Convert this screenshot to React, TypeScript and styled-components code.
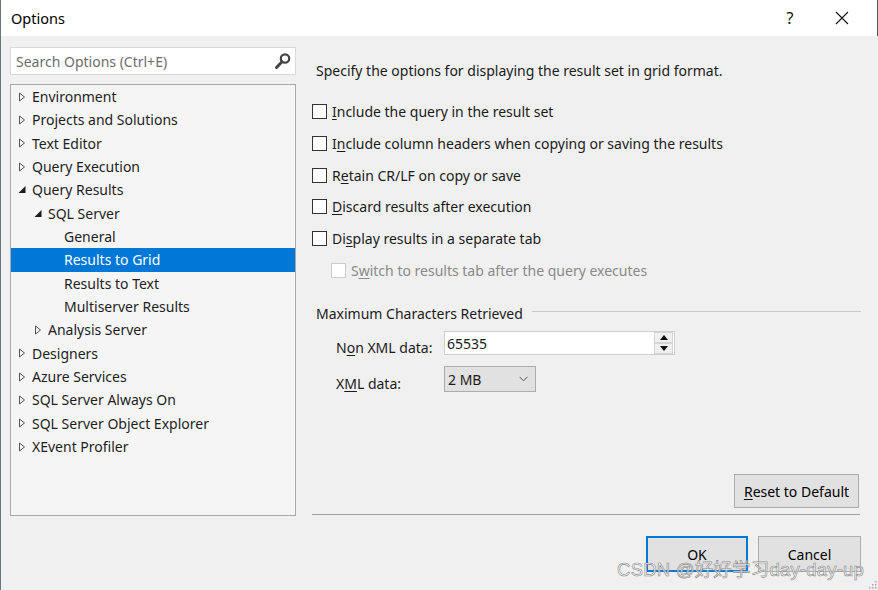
import React from "react";
import styled, { createGlobalStyle } from "styled-components";

const Global = createGlobalStyle`
  html, body { margin: 0; padding: 0; background: #f0f0f0; }
  body { font-family: "Noto Sans", "Open Sans", sans-serif; }
`;

const FONT = `"Noto Sans", "Open Sans", "Noto Sans CJK SC", sans-serif`;

const Window = styled.div`
  position: relative;
  width: 878px;
  height: 590px;
  display: flex;
  flex-direction: column;
  background: #f0f0f0;
  font-family: ${FONT};
  font-size: 14px;
  color: #1b1b1b;
  overflow: hidden;
  box-sizing: border-box;
  border-left: 1px solid #6f7380;
`;

const TitleBar = styled.div`
  height: 36px;
  flex: none;
  display: flex;
  align-items: center;
  background: #ffffff;
  padding-left: 10px;
  box-sizing: border-box;
  border-right: 1px solid #555;
`;

const Title = styled.div`
  flex: 1;
  font-size: 14.5px;
  color: #000;
`;

const TitleButton = styled.div<{ $w: number }>`
  width: ${(p) => p.$w}px;
  height: 36px;
  display: flex;
  align-items: center;
  justify-content: center;
  font-size: 16px;
  color: #111;
`;

const TitleEnd = styled.div`
  width: 6px;
`;

const Main = styled.div`
  flex: 1;
  display: flex;
  min-height: 0;
`;

const LeftPane = styled.div`
  width: 286px;
  flex: none;
  margin: 11px 0 0 9px;
  display: flex;
  flex-direction: column;
  gap: 9px;
`;

const SearchBox = styled.div`
  height: 28px;
  box-sizing: border-box;
  border: 1px solid #d9d9d9;
  background: #fff;
  display: flex;
  align-items: center;
  padding: 0 3px 0 5px;
`;

const SearchText = styled.div`
  flex: 1;
  color: #6d6d6d;
  font-size: 14px;
`;

const Tree = styled.div`
  height: 432px;
  box-sizing: border-box;
  border: 1px solid #a9a9a9;
  background: #f5f5f5;
  display: flex;
  flex-direction: column;
`;

const TreeRow = styled.div<{ $level: number; $selected?: boolean }>`
  height: 23.33px;
  flex: none;
  display: flex;
  align-items: center;
  padding-left: ${(p) => 7 + p.$level * 16}px;
  background: ${(p) => (p.$selected ? "#0078d7" : "transparent")};
  color: ${(p) => (p.$selected ? "#ffffff" : "#1e1e1e")};
  font-size: 14px;
  white-space: nowrap;
`;

const Arrow = styled.span`
  width: 14px;
  flex: none;
  display: flex;
  align-items: center;
`;

const RightPane = styled.div`
  flex: 1;
  margin-left: 16px;
  margin-right: 17px;
  display: flex;
  flex-direction: column;
`;

const Description = styled.div`
  margin-top: 25px;
  line-height: 20px;
  padding-left: 4px;
  font-size: 14px;
`;

const CheckList = styled.div`
  margin-top: 15px;
  display: flex;
  flex-direction: column;
`;

const CheckRow = styled.div<{ $indent?: boolean; $disabled?: boolean }>`
  height: 31.7px;
  display: flex;
  align-items: center;
  padding-left: ${(p) => (p.$indent ? 19 : 0)}px;
  color: ${(p) => (p.$disabled ? "#8a8a8a" : "#1b1b1b")};
  gap: 5px;
`;

const Box = styled.span<{ $disabled?: boolean }>`
  width: 15px;
  height: 15px;
  box-sizing: border-box;
  border: 1px solid ${(p) => (p.$disabled ? "#cccccc" : "#333333")};
  background: #ffffff;
  flex: none;
`;

const U = styled.span`
  text-decoration: underline;
  text-underline-offset: 2px;
`;

const GroupHeader = styled.div`
  margin-top: 17px;
  height: 20px;
  display: flex;
  align-items: center;
  gap: 9px;
  padding-left: 4px;
`;

const GroupLine = styled.div`
  flex: 1;
  height: 1px;
  background: #c8c8c8;
  margin-top: -3px;
`;

const FieldRow = styled.div<{ $mt: number; $h: number }>`
  margin-top: ${(p) => p.$mt}px;
  height: ${(p) => p.$h}px;
  display: flex;
  align-items: center;
`;

const FieldLabel = styled.div`
  width: 132px;
  padding-left: 24px;
  flex: none;
  box-sizing: border-box;
  margin-top: 9px;
  white-space: nowrap;
`;

const NumberInput = styled.div`
  width: 231px;
  height: 24px;
  box-sizing: border-box;
  border: 1px solid #cfcfcf;
  background: #fff;
  display: flex;
  align-items: center;
  padding-left: 2px;
`;

const NumberValue = styled.div`
  flex: 1;
  font-size: 14px;
`;

const Spin = styled.div`
  width: 19px;
  height: 22px;
  display: flex;
  flex-direction: column;
  margin-right: 1px;
`;

const SpinButton = styled.div`
  flex: 1;
  box-sizing: border-box;
  border: 1px solid #d4d4d4;
  background: #f0f0f0;
  display: flex;
  align-items: center;
  justify-content: center;
`;

const Combo = styled.div`
  width: 92px;
  height: 26px;
  box-sizing: border-box;
  border: 1px solid #adadad;
  background: #e1e1e1;
  display: flex;
  align-items: center;
  padding: 0 7px 0 3px;
  justify-content: space-between;
`;

const Spacer = styled.div`
  flex: 1;
`;

const ResetRow = styled.div`
  display: flex;
  justify-content: flex-end;
  padding-right: 2px;
`;

const Button = styled.div<{ $w: number; $h: number; $default?: boolean }>`
  width: ${(p) => p.$w}px;
  height: ${(p) => p.$h}px;
  box-sizing: border-box;
  border: ${(p) => (p.$default ? "2px solid #0078d7" : "1px solid #adadad")};
  background: #e1e1e1;
  display: flex;
  align-items: center;
  justify-content: center;
  font-size: 14px;
  color: #000;
`;

const Separator = styled.div`
  height: 1px;
  background: #a0a0a0;
  margin: 6px 1px 0 0;
`;

const ButtonRow = styled.div`
  margin-top: 21px;
  margin-bottom: 18px;
  display: flex;
  justify-content: flex-end;
  gap: 10px;
`;

const Watermark = styled.div`
  position: absolute;
  right: 14px;
  bottom: 9px;
  font-family: "Liberation Sans", "Noto Sans CJK SC", sans-serif;
  font-size: 18.5px;
  color: rgba(250, 250, 250, 0.75);
  -webkit-text-stroke: 0.6px #8a8a8a;
  letter-spacing: 0.2px;
  white-space: nowrap;
`;

const Grip = styled.svg`
  position: absolute;
  right: 1px;
  bottom: 1px;
`;

type Node = { label: string; level: number; state: "c" | "e" | "l"; selected?: boolean };

const nodes: Node[] = [
  { label: "Environment", level: 0, state: "c" },
  { label: "Projects and Solutions", level: 0, state: "c" },
  { label: "Text Editor", level: 0, state: "c" },
  { label: "Query Execution", level: 0, state: "c" },
  { label: "Query Results", level: 0, state: "e" },
  { label: "SQL Server", level: 1, state: "e" },
  { label: "General", level: 2, state: "l" },
  { label: "Results to Grid", level: 2, state: "l", selected: true },
  { label: "Results to Text", level: 2, state: "l" },
  { label: "Multiserver Results", level: 2, state: "l" },
  { label: "Analysis Server", level: 1, state: "c" },
  { label: "Designers", level: 0, state: "c" },
  { label: "Azure Services", level: 0, state: "c" },
  { label: "SQL Server Always On", level: 0, state: "c" },
  { label: "SQL Server Object Explorer", level: 0, state: "c" },
  { label: "XEvent Profiler", level: 0, state: "c" },
];

const ArrowIcon = ({ state }: { state: Node["state"] }) => {
  if (state === "l") return <Arrow />;
  if (state === "e")
    return (
      <Arrow>
        <svg width="9" height="9" viewBox="0 0 9 9">
          <polygon points="7.5,1 7.5,8 0.5,8" fill="#1e1e1e" />
        </svg>
      </Arrow>
    );
  return (
    <Arrow>
      <svg width="8" height="10" viewBox="0 0 8 10">
        <polygon points="1.5,1 6.5,5 1.5,9" fill="none" stroke="#555" strokeWidth="1" />
      </svg>
    </Arrow>
  );
};

const Check = ({ children, indent, disabled }: { children: React.ReactNode; indent?: boolean; disabled?: boolean }) => (
  <CheckRow $indent={indent} $disabled={disabled}>
    <Box $disabled={disabled} />
    <span>{children}</span>
  </CheckRow>
);

export default function App() {
  return (
    <>
      <Global />
      <Window>
        <TitleBar>
          <Title>Options</Title>
          <TitleButton $w={46}>?</TitleButton>
          <TitleButton $w={58}>
            <svg width="14" height="14" viewBox="0 0 14 14">
              <path d="M1 1 L13 13 M13 1 L1 13" stroke="#111" strokeWidth="1.1" />
            </svg>
          </TitleButton>
          <TitleEnd />
        </TitleBar>
        <Main>
          <LeftPane>
            <SearchBox>
              <SearchText>Search Options (Ctrl+E)</SearchText>
              <svg width="18" height="18" viewBox="0 0 18 18">
                <circle cx="11" cy="6.5" r="4.2" fill="none" stroke="#444" strokeWidth="2.2" />
                <path d="M8 9.8 L2.5 15.5" stroke="#444" strokeWidth="3" strokeLinecap="round" />
              </svg>
            </SearchBox>
            <Tree>
              {nodes.map((n) => (
                <TreeRow key={n.label} $level={n.level} $selected={n.selected}>
                  <ArrowIcon state={n.state} />
                  {n.label}
                </TreeRow>
              ))}
            </Tree>
          </LeftPane>
          <RightPane>
            <Description>Specify the options for displaying the result set in grid format.</Description>
            <CheckList>
              <Check>
                <U>I</U>nclude the query in the result set
              </Check>
              <Check>
                I<U>n</U>clude column headers when copying or saving the results
              </Check>
              <Check>
                R<U>e</U>tain CR/LF on copy or save
              </Check>
              <Check>
                <U>D</U>iscard results after execution
              </Check>
              <Check>
                Di<U>s</U>play results in a separate tab
              </Check>
              <Check indent disabled>
                S<U>w</U>itch to results tab after the query executes
              </Check>
            </CheckList>
            <GroupHeader>
              <span>Maximum Characters Retrieved</span>
              <GroupLine />
            </GroupHeader>
            <FieldRow $mt={8} $h={24}>
              <FieldLabel>
                N<U>o</U>n XML data:
              </FieldLabel>
              <NumberInput>
                <NumberValue>65535</NumberValue>
                <Spin>
                  <SpinButton>
                    <svg width="8" height="5" viewBox="0 0 8 5">
                      <polygon points="0,5 4,0 8,5" fill="#111" />
                    </svg>
                  </SpinButton>
                  <SpinButton>
                    <svg width="8" height="5" viewBox="0 0 8 5">
                      <polygon points="0,0 8,0 4,5" fill="#111" />
                    </svg>
                  </SpinButton>
                </Spin>
              </NumberInput>
            </FieldRow>
            <FieldRow $mt={11} $h={26}>
              <FieldLabel>
                X<U>M</U>L data:
              </FieldLabel>
              <Combo>
                <span>2 MB</span>
                <svg width="9" height="6" viewBox="0 0 9 6">
                  <path d="M0.5 0.8 L4.5 4.8 L8.5 0.8" fill="none" stroke="#555" strokeWidth="1" />
                </svg>
              </Combo>
            </FieldRow>
            <Spacer />
            <ResetRow>
              <Button $w={125} $h={34}>
                <span>
                  <U>R</U>eset to Default
                </span>
              </Button>
            </ResetRow>
            <Separator />
            <ButtonRow>
              <Button $w={102} $h={36} $default>
                OK
              </Button>
              <Button $w={103} $h={36}>
                Cancel
              </Button>
            </ButtonRow>
          </RightPane>
        </Main>
        <Watermark>CSDN @好好学习day-day-up</Watermark>
        <Grip width="8" height="8" viewBox="0 0 8 8">
          <rect x="6" y="0" width="1.5" height="1.5" fill="#aaa" />
          <rect x="3" y="3" width="1.5" height="1.5" fill="#aaa" />
          <rect x="6" y="3" width="1.5" height="1.5" fill="#aaa" />
          <rect x="0" y="6" width="1.5" height="1.5" fill="#aaa" />
          <rect x="3" y="6" width="1.5" height="1.5" fill="#aaa" />
          <rect x="6" y="6" width="1.5" height="1.5" fill="#aaa" />
        </Grip>
      </Window>
    </>
  );
}
